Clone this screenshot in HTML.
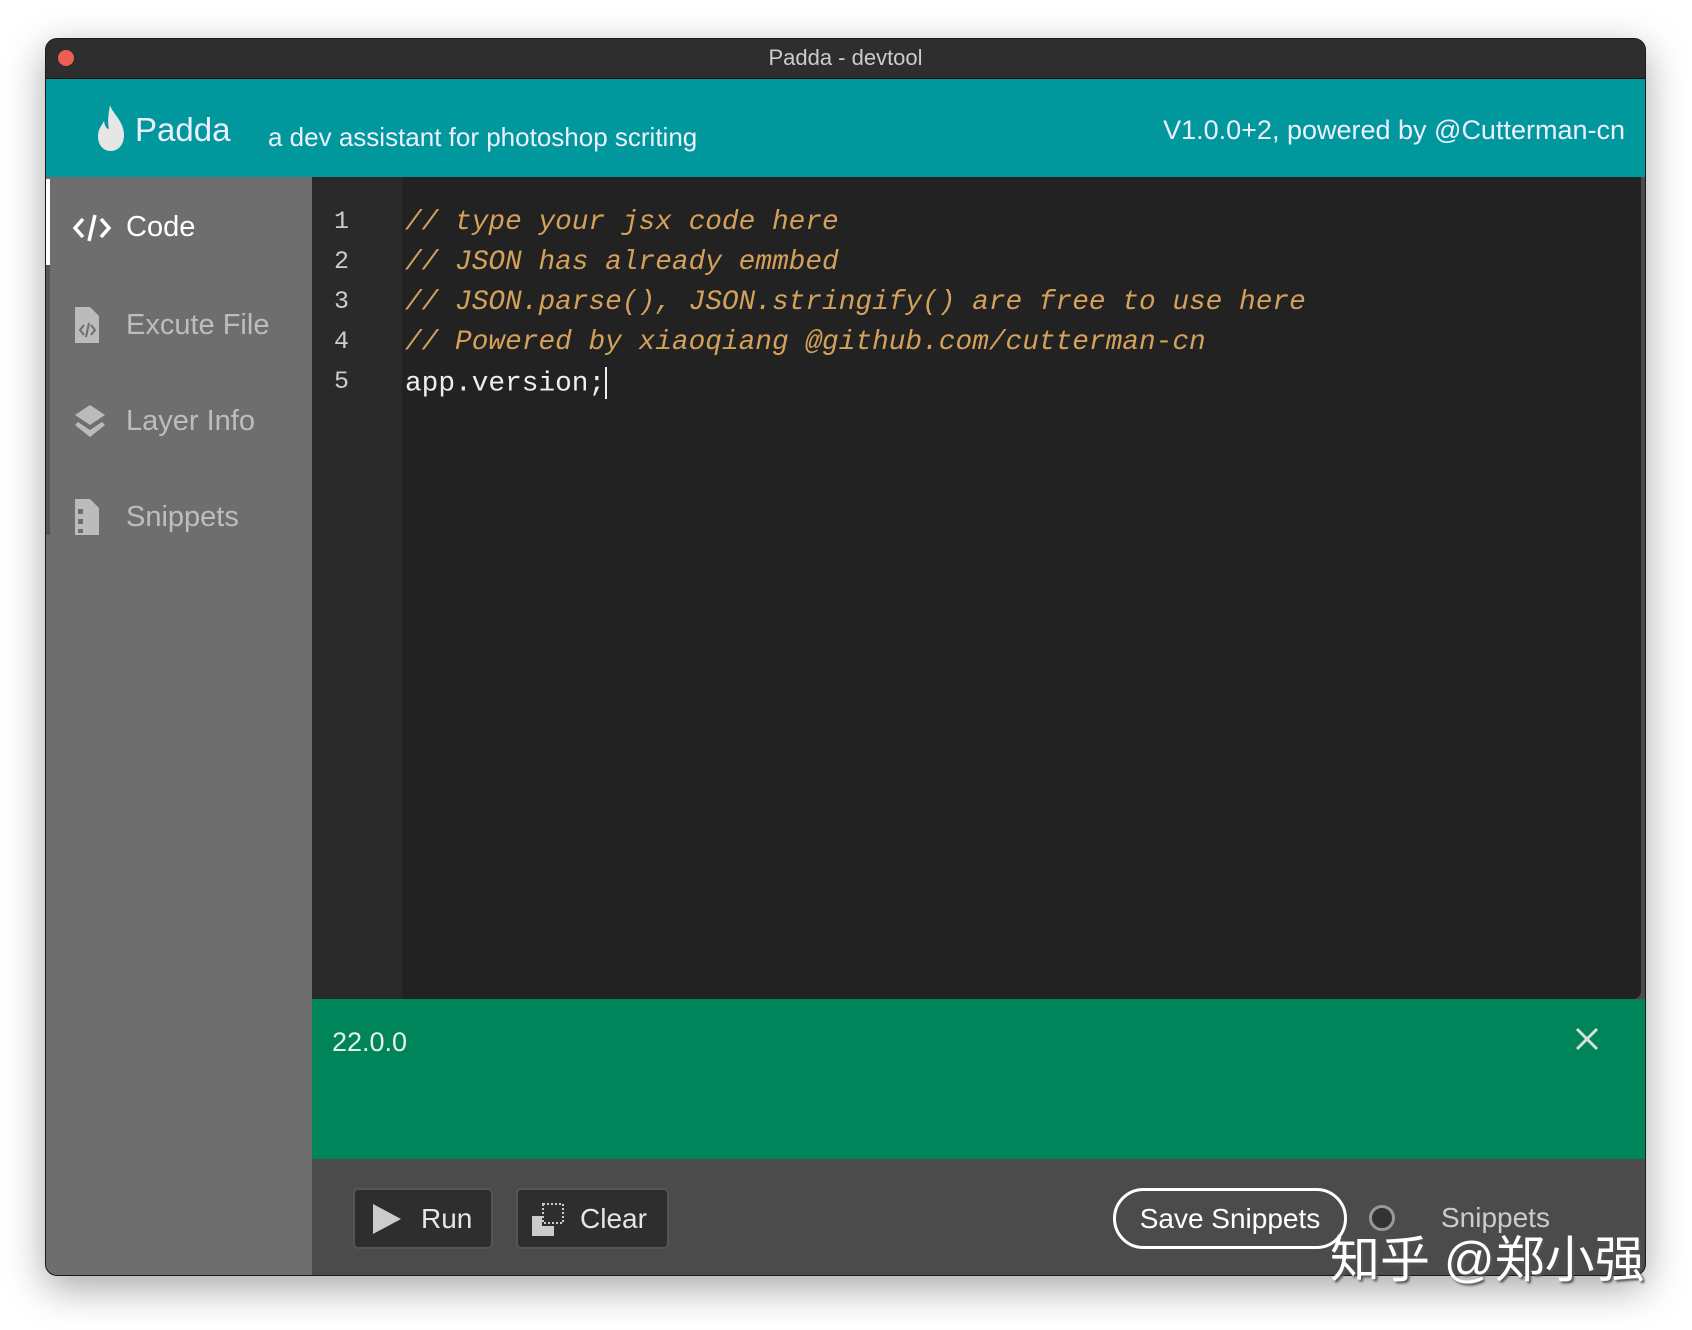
<!DOCTYPE html>
<html><head><meta charset="utf-8"><style>
*{margin:0;padding:0;box-sizing:border-box}
body{width:1692px;height:1330px;background:#fff;position:relative;overflow:hidden;font-family:"Liberation Sans",sans-serif}
.win{position:absolute;left:45px;top:38px;width:1601px;height:1238px;border-radius:12px;overflow:hidden;box-shadow:0 12px 40px rgba(0,0,0,.35);background:#4b4b4b;border:1px solid #1a1a1a}
.title{position:absolute;left:0;top:0;width:100%;height:40px;background:#2e2e2e;color:#ccc;font-size:22px;text-align:center;line-height:37px;border-bottom:1px solid #111}
.dot{position:absolute;left:12px;top:11px;width:16px;height:16px;border-radius:50%;background:#ed5e55}
.head{position:absolute;left:0;top:40px;width:100%;height:98px;background:#00989c;color:#eef}
.side{position:absolute;left:0;top:138px;width:266px;height:1100px;background:#6e6e6e}
.item{position:absolute;left:27px;font-size:29px;color:#bdbdbd;display:flex;align-items:center}
.ic{width:53px;display:flex;align-items:center}
.ed{position:absolute;left:266px;top:138px;width:1329px;height:822px;background:#222;border-radius:0 0 8px 8px}
.gut{position:absolute;left:0;top:0;width:90px;height:100%;background:#2a2a2a}
.ln{position:absolute;font-family:"Liberation Mono",monospace;font-size:25px;color:#ccc}
.code{position:absolute;left:93px;font-family:"Liberation Mono",monospace;font-size:27.8px;color:#d4a15a;font-style:italic;white-space:pre}
.out{position:absolute;left:266px;top:960px;width:1335px;height:160px;background:#00845a}
.btn{position:absolute;top:1149px;height:61px;background:#2e2e2e;border:2px solid #555;border-radius:5px;color:#e6e6e6;font-size:28px;display:flex;align-items:center}
</style></head><body>
<div class="win">
 <div class="title"><div class="dot"></div>Padda - devtool</div>
 <div class="head">
  <svg style="position:absolute;left:50px;top:26px" width="30" height="46" viewBox="0 0 30 46"><path d="M14 0C16 8 28 16 28 30C28 40 22 46 15 46C7 46 2 40 2 31C2 24 6 20 8 16C9 22 11 24 13 24C11 16 13 6 14 0Z" fill="#e6e6e6"/></svg>
  <div style="position:absolute;left:89px;top:32px;font-size:33px">Padda</div>
  <div style="position:absolute;left:222px;top:43px;font-size:26px">a dev assistant for photoshop scriting</div>
  <div style="position:absolute;right:20px;top:36px;font-size:27px">V1.0.0+2, powered by @Cutterman-cn</div>
 </div>
 <div class="side">
  <div style="position:absolute;left:0;top:2px;width:4px;height:86px;background:#fff"></div>
  <div style="position:absolute;left:0;top:88px;width:4px;height:270px;background:#555"></div>
  <div class="item" style="top:34px;color:#fff"><span class="ic"><svg width="38" height="30" viewBox="0 0 38 30"><path d="M10 6L2 15L10 24M28 6L36 15L28 24M22 2L16 28" stroke="#fff" stroke-width="3.5" fill="none"/></svg></span>Code</div>
  <div class="item" style="top:130px"><span class="ic"><svg width="28" height="36" viewBox="0 0 28 36"><path d="M2 0H17L26 9V36H2Z" fill="#bbb"/><path d="M11 18L7 23L11 28M18 18L22 23L18 28M16 16L13 30" stroke="#6e6e6e" stroke-width="2" fill="none"/></svg></span>Excute File</div>
  <div class="item" style="top:226px"><span class="ic"><svg width="34" height="36" viewBox="0 0 34 36"><path d="M17 2L32 12L17 22L2 12Z" fill="#bbb"/><path d="M5 19L17 27L29 19L32 22L17 34L2 22Z" fill="#bbb"/></svg></span>Layer Info</div>
  <div class="item" style="top:322px"><span class="ic"><svg width="28" height="36" viewBox="0 0 28 36"><path d="M2 0H17L26 9V36H2Z" fill="#bbb"/><path d="M5 10h5v5h-5zM5 20h5v5h-5zM5 30h5v4h-5z" fill="#6e6e6e"/></svg></span>Snippets</div>
 </div>
 <div class="ed">
  <div class="gut"></div>
  <div class="ln" style="left:22px;top:30px">1</div>
  <div class="ln" style="left:22px;top:70px">2</div>
  <div class="ln" style="left:22px;top:110px">3</div>
  <div class="ln" style="left:22px;top:150px">4</div>
  <div class="ln" style="left:22px;top:190px">5</div>
  <div class="code" style="top:30px">// type your jsx code here</div>
  <div class="code" style="top:70px">// JSON has already emmbed</div>
  <div class="code" style="top:110px">// JSON.parse(), JSON.stringify() are free to use here</div>
  <div class="code" style="top:150px">// Powered by xiaoqiang @github.com/cutterman-cn</div>
  <div class="code" style="top:190px;color:#eee;font-style:normal">app.version;<span style="display:inline-block;width:2px;height:32px;background:#eee;vertical-align:middle"></span></div>
 </div>
 <div class="out">
  <div style="position:absolute;left:20px;top:28px;font-size:27px;color:#e6f2ee">22.0.0</div>
  <svg style="position:absolute;left:1262px;top:27px" width="26" height="26" viewBox="0 0 26 26"><path d="M3 3L23 23M23 3L3 23" stroke="#ddd" stroke-width="3"/></svg>
 </div>
 <div class="btn" style="left:307px;width:140px"><svg style="margin:0 20px 0 18px" width="28" height="30" viewBox="0 0 28 30"><path d="M0 0L28 15L0 30Z" fill="#ccc"/></svg>Run</div>
 <div class="btn" style="left:470px;width:153px"><svg style="margin:0 14px 0 14px" width="34" height="34" viewBox="0 0 34 34"><path d="M0 14h10v10h12v10H0z" fill="#ccc"/><rect x="11" y="2" width="20" height="19" fill="none" stroke="#ccc" stroke-width="2" stroke-dasharray="2 2"/></svg>Clear</div>
 <div style="position:absolute;left:1067px;top:1149px;width:234px;height:61px;border:3px solid #fff;border-radius:31px;color:#fff;font-size:28px;text-align:center;line-height:55px">Save Snippets</div>
 <div style="position:absolute;left:1323px;top:1166px;width:26px;height:26px;border:3px solid #999;border-radius:50%;background:#333"></div>
 <div style="position:absolute;left:1395px;top:1163px;font-size:28px;color:#ccc">Snippets</div>
</div>
<div style="position:absolute;left:1330px;top:1220px;font-size:50px;color:#fff;font-family:'Liberation Sans','Noto Sans CJK SC',sans-serif;text-shadow:2px 2px 2px #555;white-space:nowrap">知乎 @郑小强</div>
</body></html>
